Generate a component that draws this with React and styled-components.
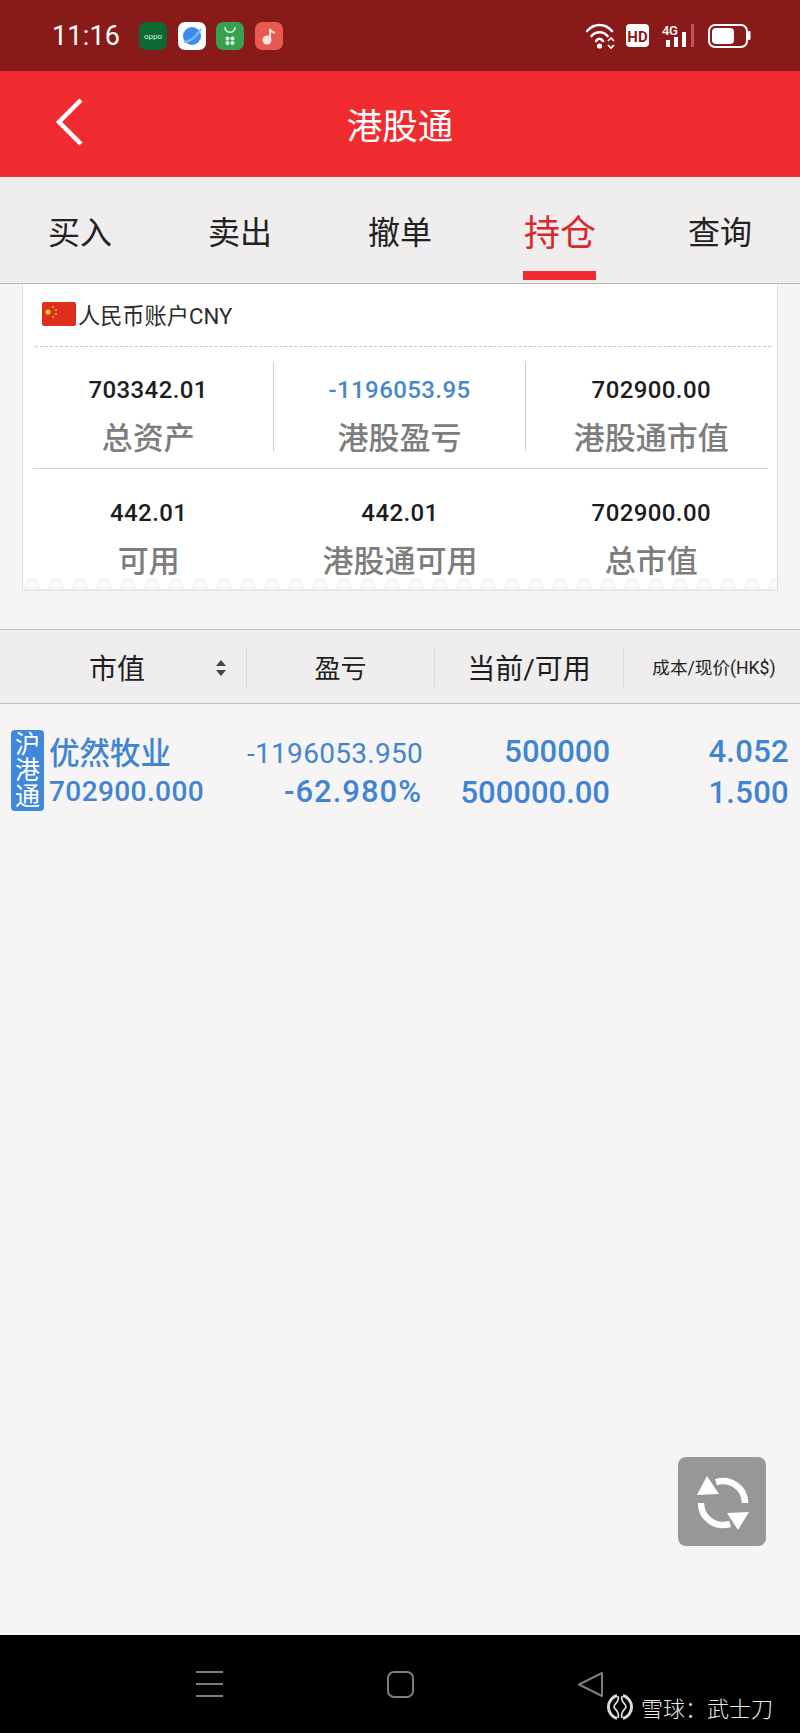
import React from 'react'
import styled, { createGlobalStyle } from 'styled-components'

const CJK = `Roboto, "Noto Sans CJK SC", sans-serif`

const GlobalStyle = createGlobalStyle`
    html, body {
        margin: 0;
        padding: 0;
        height: 100%;
        background: #f7f4f5;
    }
    * {
        box-sizing: border-box;
    }
`

const Page = styled.div`
    position: relative;
    width: 800px;
    min-height: 100vh;
    display: flex;
    flex-direction: column;
    background: #f7f4f5;
    font-family: ${CJK};
    overflow: hidden;
`

const StatusBar = styled.div`
    height: 71px;
    background: #881a1a;
    display: flex;
    align-items: center;
    padding: 0 48px 0 52px;
`
const Clock = styled.span`
    width: 87px;
    color: #fff;
    font-size: 27px;
    font-weight: 400;
    letter-spacing: 0.2px;
`
const AppIcons = styled.div`
    display: flex;
    gap: 10.5px;
`
const AppIcon = styled.div`
    width: 28px;
    height: 28px;
    border-radius: 7px;
    background: ${p => p.$bg};
    overflow: hidden;
    svg {
        display: block;
    }
`
const SystemIcons = styled.div`
    margin-left: auto;
    margin-top: 2px;
    display: flex;
    align-items: center;
`

const Header = styled.header`
    position: relative;
    height: 106px;
    background: #f02c30;
    border-bottom: 1px solid #d9383b;
    display: flex;
    align-items: center;
    justify-content: center;
    color: #fff;
    font-size: 35.5px;
    svg {
        position: absolute;
        left: 54px;
        top: 26px;
    }
`

const Tabs = styled.nav`
    height: 107px;
    background: #efedee;
    border-bottom: 1px solid #b9b7b8;
    display: grid;
    grid-template-columns: repeat(5, 1fr);
`
const Tab = styled.div`
    position: relative;
    display: flex;
    align-items: center;
    justify-content: center;
    font-size: ${p => (p.$active ? '36px' : '32px')};
    color: ${p => (p.$active ? '#d8282c' : '#222')};
    span {
        position: relative;
    }
    ${p => p.$active && `
        &::after {
            content: '';
            position: absolute;
            left: 43px;
            bottom: 3px;
            width: 73px;
            height: 9px;
            background: #f02c30;
        }
    `}
`

const Card = styled.section`
    margin: 0 22px;
    height: 307px;
    background: #fff;
    border-left: 1px solid #e0dedf;
    border-right: 1px solid #e0dedf;
    display: flex;
    flex-direction: column;
`
const CardTitle = styled.div`
    height: 63px;
    margin: 0 6px 0 12px;
    padding: 0 0 2px 7px;
    border-bottom: 1px dashed #c9c7c8;
    display: flex;
    align-items: center;
    gap: 2px;
    font-size: 22.2px;
    color: #2c2c2c;
`
const StatRow = styled.div`
    display: grid;
    grid-template-columns: repeat(3, 1fr);
    padding-top: ${p => p.$top}px;
    padding-bottom: ${p => p.$bottom}px;
    position: relative;
`
const RowLine = styled.div`
    height: 1px;
    margin: 0 9px 0 10px;
    background: #d6d4d5;
`
const Stat = styled.div`
    height: 90px;
    text-align: center;
    border-right: ${p => (p.$line ? '1px solid #d0cecf' : '0')};
`
const StatValue = styled.div`
    height: 58px;
    padding-top: 1px;
    line-height: 56px;
    font-size: 24px;
    font-weight: 500;
    letter-spacing: 0.4px;
    color: ${p => (p.$blue ? '#4a87c8' : '#1c1c1c')};
`
const StatLabel = styled.div`
    line-height: 40px;
    font-size: 31px;
    font-weight: 500;
    color: #7d7d7d;
`
const Scallops = styled.div`
    margin-top: auto;
    height: 16px;
    background-color: #fff;
    background-image: radial-gradient(circle at 12px 11px, #fbfafa 6px, #e6e4e5 6.6px, #fff 7.4px);
    background-size: 24px 16px;
    background-position: -3px 0;
    border-bottom: 2px solid #e9e7e8;
`

const TableHead = styled.div`
    margin-top: 38px;
    height: 75px;
    background: #efedee;
    border-top: 1px solid #bdbbbc;
    border-bottom: 1px solid #bdbbbc;
    display: grid;
    grid-template-columns: 247px 188px 189px 176px;
    align-items: center;
`
const HeadCell = styled.div`
    position: relative;
    height: 40px;
    display: flex;
    align-items: center;
    justify-content: center;
    padding-left: ${p => p.$left || 0}px;
    padding-right: ${p => p.$pad || 0}px;
    border-right: ${p => (p.$line ? '1px solid #d9d7d8' : '0')};
    font-size: ${p => p.$size || 28}px;
    color: #1d1d1d;
    svg {
        position: absolute;
        right: 19px;
        top: 13px;
    }
`

const TableRow = styled.div`
    display: grid;
    grid-template-columns: 247px 188px 189px 176px;
    padding-top: 26px;
    color: #3f85d2;
`
const NameCell = styled.div`
    display: flex;
    padding-left: 11px;
`
const Badge = styled.div`
    width: 33px;
    height: 81px;
    background: #3f88dc;
    border-radius: 4px;
    color: #fff;
    font-size: 25px;
    line-height: 26px;
    text-align: center;
    padding-top: 2px;
`
const NameLines = styled.div`
    margin-left: 5px;
`
const Line = styled.div`
    height: ${p => p.$h}px;
    line-height: ${p => p.$h}px;
    white-space: nowrap;
    font-size: ${p => p.$size}px;
    font-weight: ${p => p.$weight || 400};
    letter-spacing: ${p => p.$spacing || 0}px;
`
const NumCell = styled.div`
    text-align: right;
    padding-right: ${p => p.$right || 13}px;
`

const Spacer = styled.div`
    flex: 1;
`

const RefreshButton = styled.button`
    position: absolute;
    left: 678px;
    top: 1457px;
    width: 88px;
    height: 89px;
    padding: 3px 0 0 2px;
    border: 0;
    border-radius: 8px;
    background: #979797;
    display: flex;
    align-items: center;
    justify-content: center;
`

const NavBar = styled.footer`
    position: relative;
    height: 98px;
    background: #000;
    svg {
        position: absolute;
        top: 36px;
    }
`
const Watermark = styled.div`
    position: absolute;
    left: 606px;
    top: 56px;
    display: flex;
    align-items: center;
    gap: 7px;
    color: #e8e8e8;
    font-size: 22px;
    font-weight: 300;
    svg {
        position: static;
    }
`

const OppoIcon = () => (
    <svg width="28" height="28" viewBox="0 0 28 28">
        <text x="14" y="16.5" textAnchor="middle" fontSize="8" fill="#d9f5df" fontFamily="Roboto">oppo</text>
    </svg>
)
const BrowserIcon = () => (
    <svg width="28" height="28" viewBox="0 0 28 28">
        <circle cx="14" cy="14" r="9" fill="#3d8df0" />
        <path d="M6 20 C12 20 19 14 23 7" stroke="#7fc0f8" strokeWidth="2" fill="none" />
    </svg>
)
const StoreIcon = () => (
    <svg width="28" height="28" viewBox="0 0 28 28">
        <path d="M9 5 C9 12 19 12 19 5" stroke="#d7f2dc" strokeWidth="1.6" fill="none" />
        <g fill="#e0f6e3">
            <circle cx="11.5" cy="16.5" r="2" />
            <circle cx="16.5" cy="16.5" r="2" />
            <circle cx="11.5" cy="21" r="2" />
            <circle cx="16.5" cy="21" r="2" />
        </g>
    </svg>
)
const MusicIcon = () => (
    <svg width="28" height="28" viewBox="0 0 28 28">
        <circle cx="12" cy="18" r="4.5" fill="#fbe3df" />
        <path d="M15 18 V7 C15.5 10 18 10 20 11" stroke="#fbe3df" strokeWidth="2" fill="none" />
    </svg>
)

const SystemStatus = () => (
    <svg width="166" height="28" viewBox="0 0 166 28">
        <g fill="none" stroke="#fff" strokeWidth="2.6" strokeLinecap="round">
            <path d="M1 8 C8 0 19 0 26 8" />
            <path d="M5.5 13 C10 8 17 8 21.5 13" />
            <path d="M10 18 C12 15 15 15 17 18" />
        </g>
        <circle cx="13.5" cy="23" r="2.6" fill="#fff" />
        <path d="M22 18 l3 -3 l3 3 M22 22 l3 3 l3 -3" stroke="#fff" strokeWidth="1.7" fill="none" />
        <rect x="40" y="1" width="23" height="23" rx="4" fill="#fff" />
        <text x="51.5" y="18.5" textAnchor="middle" fontSize="15" fontWeight="700" fill="#881a1a" fontFamily="Roboto">HD</text>
        <text x="76" y="12" fontSize="13" fontWeight="500" fill="#fff" textAnchor="start" fontFamily="Roboto" letterSpacing="-0.5">4G</text>
        <g fill="#fff">
            <rect x="80" y="17" width="4" height="7" />
            <rect x="88" y="14" width="4" height="10" />
            <rect x="96" y="9" width="4" height="15" />
        </g>
        <rect x="105" y="1" width="3" height="23" fill="#b9585a" />
        <rect x="123" y="2" width="38" height="22" rx="6" fill="none" stroke="#fff" strokeWidth="2" />
        <rect x="126" y="5" width="22" height="16" rx="4" fill="#fff" />
        <rect x="162" y="8" width="2.5" height="9" rx="1" fill="#fff" />
    </svg>
)

const Flag = () => (
    <svg width="34" height="24" viewBox="0 0 34 24">
        <rect width="34" height="24" rx="2" fill="#de2f1c" />
        <circle cx="6" cy="10" r="2.6" fill="#f8d024" />
        <g fill="#f8d024">
            <circle cx="11" cy="5" r="0.9" />
            <circle cx="14" cy="8" r="0.9" />
            <circle cx="14" cy="12" r="0.9" />
            <circle cx="11" cy="15" r="0.9" />
        </g>
    </svg>
)

const tabs = ['买入', '卖出', '撤单', '持仓', '查询']

const stats = [
    [
        { value: '703342.01', label: '总资产', line: true },
        { value: '-1196053.95', label: '港股盈亏', line: true, blue: true },
        { value: '702900.00', label: '港股通市值' },
    ],
    [
        { value: '442.01', label: '可用' },
        { value: '442.01', label: '港股通可用' },
        { value: '702900.00', label: '总市值' },
    ],
]

const App = () => {
    return (
        <Page>
            <GlobalStyle />
            <StatusBar>
                <Clock>11:16</Clock>
                <AppIcons>
                    <AppIcon $bg="#0b6a34"><OppoIcon /></AppIcon>
                    <AppIcon $bg="#fff"><BrowserIcon /></AppIcon>
                    <AppIcon $bg="#36a24f"><StoreIcon /></AppIcon>
                    <AppIcon $bg="#e8594f"><MusicIcon /></AppIcon>
                </AppIcons>
                <SystemIcons><SystemStatus /></SystemIcons>
            </StatusBar>

            <Header>
                <svg width="34" height="54" viewBox="0 0 34 54">
                    <path d="M27 3 L5 25 L27 47" fill="none" stroke="#fff" strokeWidth="4.5" />
                </svg>
                港股通
            </Header>

            <Tabs>
                {tabs.map((t, i) => (
                    <Tab key={t} $active={i === 3}><span>{t}</span></Tab>
                ))}
            </Tabs>

            <Card>
                <CardTitle><Flag />人民币账户CNY</CardTitle>
                <StatRow $top={14} $bottom={17}>
                    {stats[0].map(s => (
                        <Stat key={s.label} $line={s.line}>
                            <StatValue $blue={s.blue}>{s.value}</StatValue>
                            <StatLabel>{s.label}</StatLabel>
                        </Stat>
                    ))}
                </StatRow>
                <RowLine />
                <StatRow $top={15} $bottom={0}>
                    {stats[1].map(s => (
                        <Stat key={s.label}>
                            <StatValue>{s.value}</StatValue>
                            <StatLabel>{s.label}</StatLabel>
                        </Stat>
                    ))}
                </StatRow>
                <Scallops />
            </Card>

            <TableHead>
                <HeadCell $line $pad={12}>
                    市值
                    <svg width="12" height="16" viewBox="0 0 12 16">
                        <path d="M6 0 L11 6 H1 Z M6 16 L11 10 H1 Z" fill="#444" />
                    </svg>
                </HeadCell>
                <HeadCell $line $size={26}>盈亏</HeadCell>
                <HeadCell $line>当前/可用</HeadCell>
                <HeadCell $size={17.6} $left={4}>成本/现价(HK$)</HeadCell>
            </TableHead>

            <TableRow>
                <NameCell>
                    <Badge>沪港通</Badge>
                    <NameLines>
                        <Line $h={47} $size={30.5} $weight={500}>优然牧业</Line>
                        <Line $h={29} $size={28} $weight={500} $spacing={0.4}>702900.000</Line>
                    </NameLines>
                </NameCell>
                <NumCell>
                    <Line $h={47} $size={28} $spacing={0.3}>-1196053.950</Line>
                    <Line $h={29} $size={31} $weight={500} $spacing={1}>-62.980%</Line>
                </NumCell>
                <NumCell $right={14}>
                    <Line $h={43} $size={31} $weight={500}>500000</Line>
                    <Line $h={39} $size={31} $weight={500}>500000.00</Line>
                </NumCell>
                <NumCell $right={11}>
                    <Line $h={43} $size={31} $weight={500} $spacing={0.3}>4.052</Line>
                    <Line $h={39} $size={31} $weight={500} $spacing={0.3}>1.500</Line>
                </NumCell>
            </TableRow>

            <Spacer />

            <RefreshButton>
                <svg width="54" height="54" viewBox="0 0 54 54">
                    <g fill="none" stroke="#fff" strokeWidth="6.5">
                        <path d="M49 27 A22 22 0 0 0 20 6.2" />
                        <path d="M5 27 A22 22 0 0 0 34 47.8" />
                    </g>
                    <path d="M11 0 L1 19 L23 18 Z" fill="#fff" />
                    <path d="M53 36 L42 54 L31 37 Z" fill="#fff" />
                </svg>
            </RefreshButton>

            <NavBar>
                <svg style={{ left: 196 }} width="27" height="26" viewBox="0 0 27 26">
                    <path d="M0 1 H27 M0 13 H27 M0 25 H27" stroke="#7d7d7d" strokeWidth="2" />
                </svg>
                <svg style={{ left: 387 }} width="27" height="27" viewBox="0 0 27 27">
                    <rect x="1" y="1" width="25" height="25" rx="6" fill="none" stroke="#7d7d7d" strokeWidth="2" />
                </svg>
                <svg style={{ left: 577 }} width="27" height="27" viewBox="0 0 27 27">
                    <path d="M25 2 V25 L2 13.5 Z" fill="none" stroke="#7d7d7d" strokeWidth="2" strokeLinejoin="round" />
                </svg>
                <Watermark>
                    <svg width="28" height="28" viewBox="0 0 28 28">
                        <path d="M11 2.5 A12 12 0 0 0 11 25.5 M17 2.5 A12 12 0 0 1 17 25.5" fill="none" stroke="#d8d8d8" strokeWidth="3" />
                        <path d="M12 3 C14 10 7 11 8 14 C9 17 14 18 12 25 M16 3 C14 10 21 11 20 14 C19 17 14 18 16 25" fill="none" stroke="#d8d8d8" strokeWidth="1.8" />
                    </svg>
                    雪球：武士刀
                </Watermark>
            </NavBar>
        </Page>
    )
}

export default App
